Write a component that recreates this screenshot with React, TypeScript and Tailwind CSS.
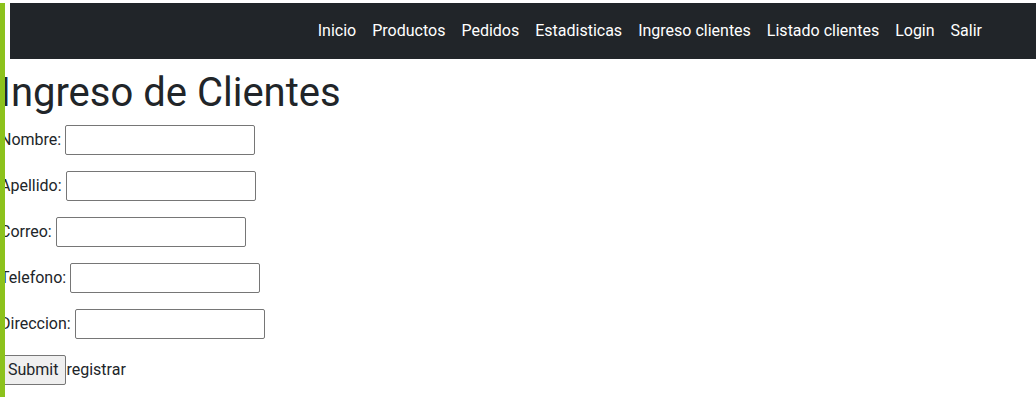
const links = [
  "Inicio",
  "Productos",
  "Pedidos",
  "Estadisticas",
  "Ingreso clientes",
  "Listado clientes",
  "Login",
  "Salir",
];

const fields = ["Nombre", "Apellido", "Correo", "Telefono", "Direccion"];

export default function App() {
  return (
    <div className="relative min-h-[397px] bg-white font-['Roboto',sans-serif] text-[16px] text-[#212529]">
      {/* franja verde sobre el borde izquierdo */}
      <div className="absolute left-0 top-0 z-10 h-full w-[5px] bg-[#8cc21c]" />

      <nav className="ml-[10px] mt-[3px] flex h-[56px] items-center justify-end bg-[#212529] pr-[46px]">
        {links.map((link) => (
          <a key={link} href="#" className="px-2 text-white">
            {link}
          </a>
        ))}
      </nav>

      <h1 className="mt-[10px] mb-2 text-[40px] font-normal leading-[48px]">
        Ingreso de Clientes
      </h1>

      <form onSubmit={(e) => e.preventDefault()}>
        {fields.map((field) => (
          <p key={field} className="mb-4 flex items-center">
            <label htmlFor={field}>{field}:</label>
            <input
              id={field}
              type="text"
              className="ml-1 h-[30px] w-[190px] rounded-[2px] border border-[#767676] bg-white px-0.5"
            />
          </p>
        ))}
        <div className="flex items-center">
          <button
            type="submit"
            className="h-[30px] rounded-[2px] border border-[#767676] bg-[#efefef] px-[7px]"
          >
            Submit
          </button>
          <span>registrar</span>
        </div>
      </form>
    </div>
  );
}
